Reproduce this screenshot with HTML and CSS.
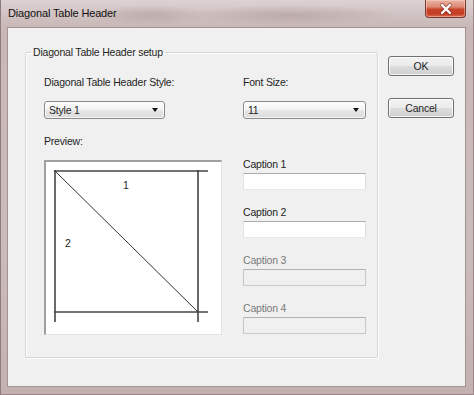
FILE: index.html
```html
<!DOCTYPE html>
<html>
<head>
<meta charset="utf-8">
<title>Diagonal Table Header</title>
<link rel="stylesheet" href="styles.css">
</head>
<body>
<div class="window">
  <div class="titlebar">
    <span class="title">Diagonal Table Header</span>
    <button class="close" aria-label="Close">
      <svg width="14" height="12" viewBox="0 0 14 12">
        <path d="M3 2 L11 10 M11 2 L3 10" stroke="#5a1a10" stroke-width="4" stroke-linecap="round" opacity="0.45"/>
        <path d="M3 2 L11 10 M11 2 L3 10" stroke="#ffffff" stroke-width="2.4" stroke-linecap="round"/>
      </svg>
    </button>
  </div>
  <div class="client">
    <fieldset class="group">
      <legend class="legend">Diagonal Table Header setup</legend>
      <div class="cols">
        <div class="col-left">
          <div class="label">Diagonal Table Header Style:</div>
          <div class="combo combo-style"><span>Style 1</span><span class="arrow"></span></div>
          <div class="label label-preview">Preview:</div>
          <div class="preview">
            <svg width="175" height="172" viewBox="0 0 175 172">
              <line x1="8" y1="9" x2="162" y2="9" stroke="#454545" stroke-width="1.6"/>
              <line x1="9" y1="8" x2="9" y2="160" stroke="#454545" stroke-width="1.6"/>
              <line x1="152" y1="8" x2="152" y2="160" stroke="#454545" stroke-width="1.6"/>
              <line x1="8" y1="150" x2="162" y2="150" stroke="#454545" stroke-width="1.6"/>
              <line x1="9" y1="9" x2="152" y2="150" stroke="#333333" stroke-width="1"/>
              <text x="77" y="27" class="pv-text">1</text>
              <text x="19" y="85" class="pv-text">2</text>
            </svg>
          </div>
        </div>
        <div class="col-right">
          <div class="label">Font Size:</div>
          <div class="combo combo-size"><span>11</span><span class="arrow"></span></div>
          <div class="field field-first">
            <div class="label">Caption 1</div>
            <div class="textbox"></div>
          </div>
          <div class="field">
            <div class="label">Caption 2</div>
            <div class="textbox"></div>
          </div>
          <div class="field disabled">
            <div class="label">Caption 3</div>
            <div class="textbox"></div>
          </div>
          <div class="field disabled">
            <div class="label">Caption 4</div>
            <div class="textbox"></div>
          </div>
        </div>
      </div>
    </fieldset>
    <div class="buttons">
      <button class="btn">OK</button>
      <button class="btn">Cancel</button>
    </div>
  </div>
</div>
</body>
</html>
```
FILE: styles.css
```css
* {
  box-sizing: border-box;
}

body {
  margin: 0;
  font-family: "Liberation Sans", Arial, sans-serif;
  font-size: 10.5px;
  letter-spacing: -0.2px;
  color: #1e1e1e;
  background: #cbbcbc;
}

.window {
  width: 474px;
  height: 395px;
  display: flex;
  flex-direction: column;
  padding: 0 8px 8px 7px;
  background:
    radial-gradient(ellipse 60px 10px at 150px 15px, rgba(150, 130, 130, 0.35), transparent),
    radial-gradient(ellipse 110px 10px at 290px 15px, rgba(150, 125, 125, 0.35), transparent),
    linear-gradient(to bottom, #ddd1d1 0, #d2c4c4 14px, #c8b7b7 27px, #cbbcbc 60%, #c3b1b1 100%);
  box-shadow: inset 1px 0 0 #8f7b7b, inset -1px 0 0 #9a8686, inset 0 -1px 0 #9a8686;
}

.titlebar {
  height: 27px;
  display: flex;
  align-items: flex-start;
  flex: none;
}

.title {
  margin: 6px 0 0 1px;
  font-size: 11px;
  letter-spacing: -0.15px;
  line-height: 14px;
  color: #111;
}

.close {
  margin-left: auto;
  width: 41px;
  height: 18px;
  padding: 0;
  border: 1px solid #7a3a30;
  border-top: none;
  border-radius: 0 0 4px 4px;
  background: linear-gradient(to bottom, #eab3a3 0, #dc8a74 40%, #c7432a 55%, #c53e24 80%, #d86a4f 100%);
  box-shadow: inset 0 0 0 1px rgba(255, 220, 210, 0.45);
  display: flex;
  align-items: center;
  justify-content: center;
}

.close svg {
  display: block;
}

.client {
  flex: 1;
  display: flex;
  align-items: flex-start;
  background: #f0f0f0;
  border: 1px solid #a39393;
  padding: 17px 0 0 17px;
}

.group {
  margin: 0;
  width: 353px;
  padding: 16px 11px 22px 18px;
  border: 1px solid #d5d5d5;
  border-radius: 2px;
  box-shadow: 1px 1px 0 #ffffff, inset 1px 1px 0 #ffffff;
}

.legend {
  padding: 0 2px;
  margin-left: -13px;
  line-height: 14px;
  font-size: 10.5px;
}

.cols {
  display: grid;
  grid-template-columns: 178px 123px;
  column-gap: 21px;
}

.label {
  line-height: 14px;
  height: 14px;
  white-space: nowrap;
}

.combo {
  margin-top: 12px;
  height: 18px;
  border: 1px solid #8a8a8a;
  border-radius: 3px;
  background: linear-gradient(to bottom, #fcfcfc 0, #f3f3f3 50%, #e6e6e6 51%, #dcdcdc 100%);
  box-shadow: inset 0 0 0 1px rgba(255, 255, 255, 0.7);
  display: flex;
  align-items: center;
  justify-content: space-between;
  padding: 0 6px 0 4px;
  line-height: 14px;
}

.combo-style {
  width: 121px;
}

.combo-size {
  width: 123px;
}

.arrow {
  width: 0;
  height: 0;
  border-left: 3.5px solid transparent;
  border-right: 3.5px solid transparent;
  border-top: 4px solid #111;
}

.label-preview {
  margin-top: 15px;
}

.preview {
  margin-top: 12px;
  width: 178px;
  height: 175px;
  background: #fff;
  border-top: 2px solid #a0a0a0;
  border-left: 2px solid #a0a0a0;
  border-right: 1px solid #e4e4e4;
  border-bottom: 1px solid #e4e4e4;
}

.preview svg {
  display: block;
}

.pv-text {
  font-family: "Liberation Sans", Arial, sans-serif;
  font-size: 10.5px;
  fill: #1e1e1e;
}

.field {
  margin-top: 15px;
}

.field-first {
  margin-top: 38px;
}

.textbox {
  margin-top: 2px;
  height: 17px;
  background: #fff;
  border: 1px solid;
  border-color: #abadb3 #dbdfe6 #e3e9ef #e2e3ea;
}

.field.disabled .label {
  color: #7a7a7a;
}

.field.disabled .textbox {
  background: #f0f0f0;
  border-color: #b2b2b2 #c6c6c6 #c9c9c9 #c6c6c6;
}

.buttons {
  margin: 11px 0 0 10px;
  display: flex;
  flex-direction: column;
  gap: 22px;
}

.btn {
  width: 66px;
  height: 20px;
  padding: 0;
  font-family: "Liberation Sans", Arial, sans-serif;
  font-size: 10.5px;
  letter-spacing: -0.2px;
  color: #1e1e1e;
  border: 1px solid #707070;
  border-radius: 3px;
  background: linear-gradient(to bottom, #f2f2f2 0, #ebebeb 50%, #dddddd 51%, #cfcfcf 100%);
  box-shadow: inset 0 0 0 1px rgba(255, 255, 255, 0.8);
}
```
